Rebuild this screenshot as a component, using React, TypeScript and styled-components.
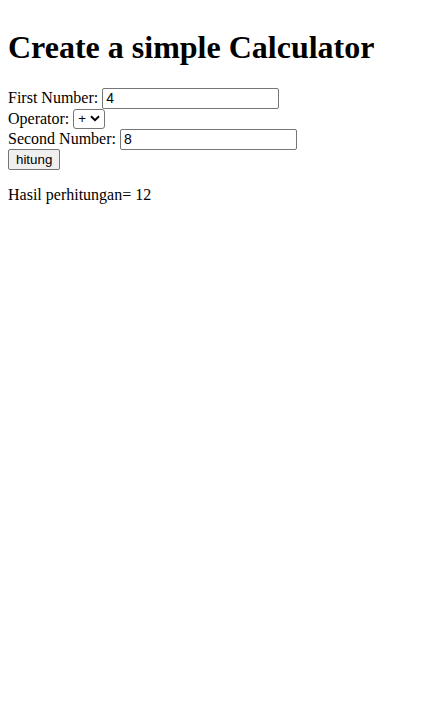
import React, { useState } from 'react';
import styled, { createGlobalStyle } from 'styled-components';

const GlobalStyle = createGlobalStyle`
    body {
        margin: 8px;
        background: #ffffff;
        color: #000000;
        font-family: "Liberation Serif", "Times New Roman", serif;
        font-size: 16px;
    }
`;

const Title = styled.h1`
    font-size: 32px;
    font-weight: 700;
    margin: 21.44px 0;
`;

const Form = styled.form`
    display: block;
`;

const Row = styled.div`
    display: flex;
    align-items: center;
    height: 20.5px;
`;

const Label = styled.span`
    white-space: pre;
`;

const NumberInput = styled.input`
    box-sizing: border-box;
    width: 177px;
    height: 21px;
    margin: 0;
    padding: 1px 3px;
    border: 1px solid #767676;
    border-radius: 2px;
    font-family: "Liberation Sans", Arial, sans-serif;
    font-size: 14px;
    color: #000;
    background: #fff;
`;

const SelectWrap = styled.span`
    position: relative;
    display: inline-block;
    width: 32px;
    height: 20px;
`;

const Select = styled.select`
    appearance: none;
    box-sizing: border-box;
    width: 32px;
    height: 20px;
    margin: 0;
    padding: 0 0 0 4px;
    border: 1px solid #767676;
    border-radius: 3px;
    font-family: "Liberation Sans", Arial, sans-serif;
    font-size: 13.33px;
    color: #000;
    background: #fff;
`;

const Chevron = styled.svg`
    position: absolute;
    right: 5px;
    top: 6px;
    pointer-events: none;
`;

const Button = styled.button`
    box-sizing: border-box;
    height: 21px;
    margin: 0;
    padding: 1px 7px;
    border: 1px solid #767676;
    border-radius: 2px;
    background: #efefef;
    font-family: "Liberation Sans", Arial, sans-serif;
    font-size: 13.33px;
    color: #000;
`;

const Result = styled.p`
    margin: 16px 0;
`;

const App: React.FC = () => {
    const [first, setFirst] = useState('4');
    const [op, setOp] = useState('+');
    const [second, setSecond] = useState('8');

    return (
        <>
            <GlobalStyle />
            <Title>Create a simple Calculator</Title>
            <Form onSubmit={(e) => e.preventDefault()}>
                <Row>
                    <Label>First Number: </Label>
                    <NumberInput type="text" value={first} onChange={(e) => setFirst(e.target.value)} />
                </Row>
                <Row>
                    <Label>Operator: </Label>
                    <SelectWrap>
                        <Select value={op} onChange={(e) => setOp(e.target.value)}>
                            <option value="+">+</option>
                            <option value="-">-</option>
                            <option value="*">*</option>
                            <option value="/">/</option>
                        </Select>
                        <Chevron width="10" height="7" viewBox="0 0 10 7">
                            <path d="M1 1.2 L5 5.2 L9 1.2" fill="none" stroke="#000" strokeWidth="2" />
                        </Chevron>
                    </SelectWrap>
                </Row>
                <Row>
                    <Label>Second Number: </Label>
                    <NumberInput type="text" value={second} onChange={(e) => setSecond(e.target.value)} />
                </Row>
                <Row>
                    <Button type="submit">hitung</Button>
                </Row>
            </Form>
            <Result>Hasil perhitungan= 12</Result>
        </>
    );
};

export default App;
